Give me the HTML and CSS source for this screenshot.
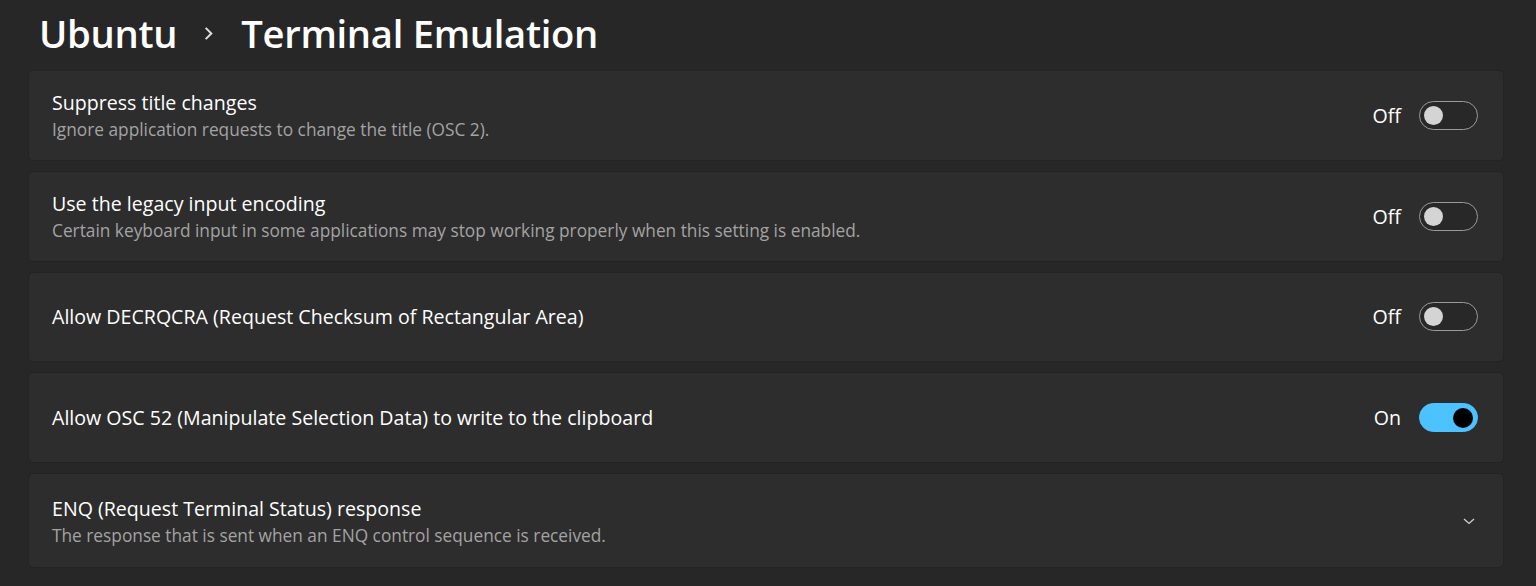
FILE: index.html
```html
<!DOCTYPE html>
<html>
<head>
    <meta charset="UTF-8">
    <title>Terminal Emulation</title>
    <link rel="stylesheet" href="styles.css">
</head>
<body>
    <div class="page">
        <h1 class="breadcrumb">
            <span class="crumb">Ubuntu</span>
            <svg class="crumb-sep" viewBox="0 0 12 12" fill="none" stroke="currentColor" stroke-width="1.4">
                <polyline points="4 2 8 6 4 10"/>
            </svg>
            <span class="crumb">Terminal Emulation</span>
        </h1>

        <div class="settings">
            <div class="setting-card">
                <div class="setting-text">
                    <span class="setting-title">Suppress title changes</span>
                    <span class="setting-description">Ignore application requests to change the title (OSC 2).</span>
                </div>
                <div class="toggle-group">
                    <span class="toggle-label">Off</span>
                    <span class="toggle"></span>
                </div>
            </div>

            <div class="setting-card">
                <div class="setting-text">
                    <span class="setting-title">Use the legacy input encoding</span>
                    <span class="setting-description">Certain keyboard input in some applications may stop working properly when this setting is enabled.</span>
                </div>
                <div class="toggle-group">
                    <span class="toggle-label">Off</span>
                    <span class="toggle"></span>
                </div>
            </div>

            <div class="setting-card">
                <div class="setting-text">
                    <span class="setting-title">Allow DECRQCRA (Request Checksum of Rectangular Area)</span>
                </div>
                <div class="toggle-group">
                    <span class="toggle-label">Off</span>
                    <span class="toggle"></span>
                </div>
            </div>

            <div class="setting-card">
                <div class="setting-text">
                    <span class="setting-title">Allow OSC 52 (Manipulate Selection Data) to write to the clipboard</span>
                </div>
                <div class="toggle-group">
                    <span class="toggle-label">On</span>
                    <span class="toggle on"></span>
                </div>
            </div>

            <div class="setting-card expander">
                <div class="setting-text">
                    <span class="setting-title">ENQ (Request Terminal Status) response</span>
                    <span class="setting-description">The response that is sent when an ENQ control sequence is received.</span>
                </div>
                <svg class="expand-icon" viewBox="0 0 16 16" fill="none" stroke="currentColor" stroke-width="1.3">
                    <polyline points="3 6 8 10.5 13 6"/>
                </svg>
            </div>
        </div>
    </div>
</body>
</html>
```

FILE: styles.css
```css
body {
    margin: 0;
    background-color: #272727;
    color: #ffffff;
    font-family: "Open Sans", "Noto Sans", Arial, sans-serif;
}

.page {
    padding: 0 32px 0 28px;
}

/* パンくず */
.breadcrumb {
    display: flex;
    align-items: center;
    margin: 0;
    padding: 2px 0 0 11px;
    height: 64px;
    box-sizing: border-box;
    font-size: 38.2px;
    font-weight: 600;
    letter-spacing: -0.3px;
}

.crumb-sep {
    width: 17px;
    height: 17px;
    margin: 0 24px 0 23px;
    color: #e0e0e0;
}

/* 設定カード */
.settings {
    display: flex;
    flex-direction: column;
    gap: 10px;
    margin-top: 6px;
}

.setting-card {
    display: flex;
    align-items: center;
    min-height: 90.75px;
    padding: 0 25px 0 23px;
    box-sizing: border-box;
    background-color: #2d2d2d;
    border: 1px solid #232323;
    border-radius: 5px;
}

.setting-card.expander {
    min-height: 95px;
}

.setting-text {
    flex: 1;
    display: flex;
    flex-direction: column;
    gap: 2px;
}

.setting-title {
    font-size: 19.6px;
    color: #ffffff;
}

.setting-description {
    font-size: 17.3px;
    color: #a3a3a3;
}

/* トグル */
.toggle-group {
    display: flex;
    align-items: center;
    gap: 18px;
}

.toggle-label {
    font-size: 19.6px;
}

.toggle {
    position: relative;
    display: inline-block;
    width: 57px;
    height: 27px;
    border: 1.5px solid #9a9a9a;
    border-radius: 16px;
    background-color: #282828;
}

.toggle:before {
    position: absolute;
    content: "";
    width: 19px;
    height: 19px;
    left: 4px;
    top: 4px;
    background-color: #d4d4d4;
    border-radius: 50%;
}

.toggle.on {
    background-color: #4cc2ff;
    border-color: #4cc2ff;
}

.toggle.on:before {
    left: auto;
    right: 4px;
    width: 20px;
    height: 20px;
    top: 3.5px;
    background-color: #000000;
}

.expand-icon {
    width: 16px;
    height: 16px;
    margin-right: 1px;
    color: #d0d0d0;
}
```
